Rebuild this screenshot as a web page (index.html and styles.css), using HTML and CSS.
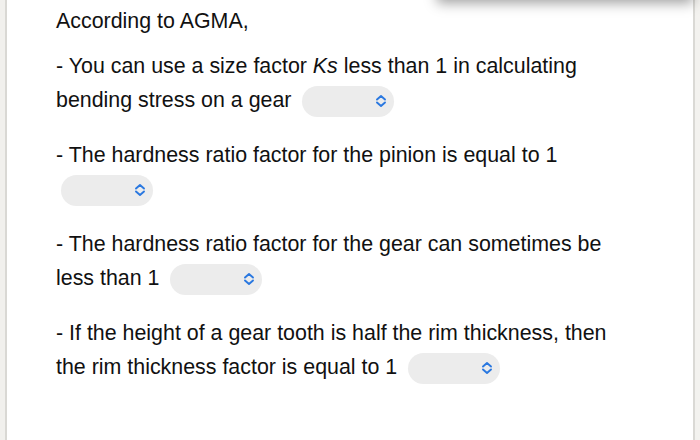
FILE: index.html
```html
<!DOCTYPE html>
<html>
<head>
<meta charset="utf-8">
<link rel="stylesheet" href="styles.css">
</head>
<body>
<div class="page">
  <div class="edge-left"></div>
  <main class="sheet">
    <div class="menu-shadow"></div>
    <p class="intro">According to AGMA,</p>
    <p class="item">- You can use a size factor <i>Ks</i> less than 1 in calculating bending stress on a gear <span class="select"><svg class="chev" viewBox="0 0 12 14"><path d="M2 5.5 L6 2 L10 5.5 M2 8.5 L6 12 L10 8.5"/></svg></span></p>
    <p class="item">- The hardness ratio factor for the pinion is equal to 1 <span class="select"><svg class="chev" viewBox="0 0 12 14"><path d="M2 5.5 L6 2 L10 5.5 M2 8.5 L6 12 L10 8.5"/></svg></span></p>
    <p class="item">- The hardness ratio factor for the gear can sometimes be less than 1 <span class="select"><svg class="chev" viewBox="0 0 12 14"><path d="M2 5.5 L6 2 L10 5.5 M2 8.5 L6 12 L10 8.5"/></svg></span></p>
    <p class="item">- If the height of a gear tooth is half the rim thickness, then the rim thickness factor is equal to 1 <span class="select"><svg class="chev" viewBox="0 0 12 14"><path d="M2 5.5 L6 2 L10 5.5 M2 8.5 L6 12 L10 8.5"/></svg></span></p>
  </main>
  <div class="edge-right"></div>
</div>
</body>
</html>
```
FILE: styles.css
```css
html, body {
  margin: 0;
  padding: 0;
  background: #ffffff;
}
.page {
  display: flex;
  width: 700px;
  height: 440px;
  overflow: hidden;
}
.edge-left {
  width: 5px;
  background: #f1f0ed;
  border-right: 2px solid #d9d8d4;
}
.edge-right {
  width: 5px;
  background: #f3f2ef;
  border-left: 2px solid #dad9d5;
}
.sheet {
  position: relative;
  flex: 1;
  background: #ffffff;
  padding: 4.5px 68px 0 49px;
  font-family: "Liberation Sans", Arial, sans-serif;
  font-size: 21.4px;
  line-height: 33.5px;
  color: #111111;
}
.menu-shadow {
  position: absolute;
  top: -40px;
  left: 430px;
  width: 256px;
  height: 40px;
  background: #ffffff;
  box-shadow: 0 3px 12px rgba(0, 0, 0, 0.38);
}
p {
  margin: 0;
}
.intro {
  margin-bottom: 12px;
}
.item {
  margin-bottom: 22px;
}
.item i {
  font-style: italic;
}
.select {
  display: inline-flex;
  align-items: center;
  justify-content: flex-end;
  box-sizing: border-box;
  width: 92px;
  height: 31px;
  margin-left: 5px;
  margin-top: 2px;
  padding-right: 7px;
  border-radius: 16px;
  background: #ececec;
  vertical-align: top;
}
.chev {
  width: 12px;
  height: 14px;
  fill: none;
  stroke: #2a78e0;
  stroke-width: 1.9;
  stroke-linecap: round;
  stroke-linejoin: round;
}
```
